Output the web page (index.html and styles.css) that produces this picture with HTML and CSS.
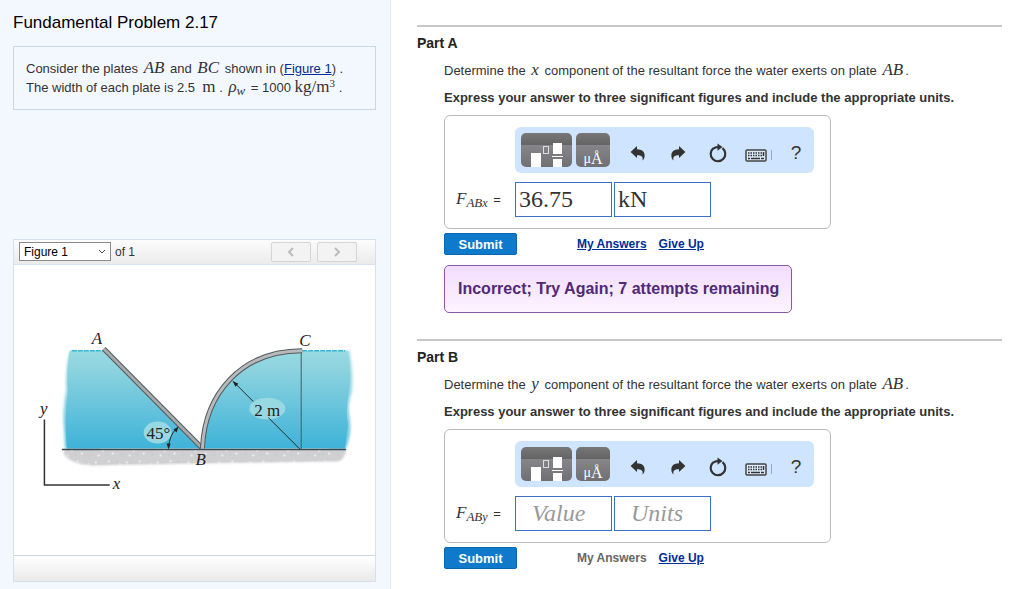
FILE: index.html
```html
<!DOCTYPE html>
<html lang="en">
<head>
    <meta charset="UTF-8">
    <meta name="viewport" content="width=device-width, initial-scale=1.0">
    <title>Fundamental Problem 2.17</title>
    <link rel="stylesheet" href="styles.css">
</head>
<body>
    <!-- shared icons -->
    <svg class="sprite" aria-hidden="true">
        <symbol id="icon-undo" viewBox="0 0 16 16">
            <path d="M7 1v3.200c5 .1 8 2.600 7.600 6.800-.1 2-.9 3.500-2.200 4.500 1-3.700-.7-5.200-5.400-5.200V13L.6 7z"/>
        </symbol>
        <symbol id="icon-redo" viewBox="0 0 16 16">
            <path d="M9 1v3.200C4 4.300 1 6.800 1.400 11c.1 2 .9 3.500 2.200 4.500-1-3.700.7-5.200 5.400-5.200V13l6.400-6z"/>
        </symbol>
        <symbol id="icon-reset" viewBox="0 0 20 20">
            <path d="M14.500 5.200a7.300 7.300 0 1 1-9.300.2" fill="none" stroke="#333" stroke-width="2.200"/>
            <path d="M9.500.5l5 3.500-5 3.800z"/>
            <path d="M5 5.800Q7 4 10.500 3.800" fill="none" stroke="#333" stroke-width="2.200"/>
        </symbol>
        <symbol id="icon-keyboard" viewBox="0 0 22 13">
            <rect x="1" y="1" width="20" height="11" rx="1" fill="#dcebfa" stroke="#444" stroke-width="1.500"/>
            <path d="M3 4h15M3 6.500h15" fill="none" stroke="#333" stroke-width="1.500" stroke-dasharray="1.500 1"/>
            <path d="M3 9.500h2M6 9.500h9M16 9.500h3M18.500 3v4" fill="none" stroke="#333" stroke-width="1.500"/>
        </symbol>
        <symbol id="icon-template" viewBox="0 0 32 24">
            <rect x="0" y="10" width="10" height="14" fill="#fff"/>
            <rect x="12.500" y="3.500" width="5" height="7" fill="none" stroke="#ddd"/>
            <rect x="22" y="0" width="9" height="11" fill="#fff"/>
            <rect x="21" y="13" width="11" height="1" fill="#fff"/>
            <rect x="22" y="16" width="9" height="8" fill="#fff"/>
        </symbol>
    </svg>

    <div class="page">
        <aside class="sidebar">
            <h1>Fundamental Problem 2.17</h1>
            <div class="intro">
                Consider the plates <i class="math">AB</i> and <i class="math">BC</i> shown in (<a href="#figure">Figure 1</a>) .<br>
                The width of each plate is 2.5&nbsp; <span class="unit">m</span> . <i class="math">ρ<sub>w</sub></i> = 1000 <span class="unit">kg/m<sup>3</sup></span> .
            </div>

            <div class="figure-panel" id="figure">
                <div class="figure-bar">
                    <div class="picker">
                        <select id="figureSelect">
                            <option>Figure 1</option>
                        </select>
                        <svg width="8" height="6" viewBox="0 0 8 6"><path d="M1 1l3 3 3-3"/></svg>
                    </div>
                    <label for="figureSelect">of 1</label>
                    <div class="pager">
                        <button type="button" aria-label="Previous figure" disabled>
                            <svg width="8" height="10" viewBox="0 0 8 10"><path d="M6 1L2 5l4 4"/></svg>
                        </button>
                        <button type="button" aria-label="Next figure" disabled>
                            <svg width="8" height="10" viewBox="0 0 8 10"><path d="M2 1l4 4-4 4"/></svg>
                        </button>
                    </div>
                </div>
                <svg class="drawing" viewBox="14 265 362 291" role="img" aria-label="Plates AB and BC holding water">
                    <defs>
                        <linearGradient id="water" gradientUnits="userSpaceOnUse" x1="0" y1="350" x2="0" y2="450">
                            <stop offset="0" stop-color="#98dae1"/>
                            <stop offset="0.200" stop-color="#8cd3df"/>
                            <stop offset="1" stop-color="#3db2d8"/>
                        </linearGradient>
                        <filter id="soft"><feGaussianBlur stdDeviation="1.200"/></filter>
                        <pattern id="gravel" width="31" height="17" patternUnits="userSpaceOnUse">
                            <rect width="31" height="17" fill="#d0d0d3"/>
                            <g fill="#f6f6f7">
                                <circle cx="3" cy="4" r="1"/><circle cx="10" cy="9" r="1"/>
                                <circle cx="16" cy="3" r="1"/><circle cx="20" cy="12" r="1"/>
                                <circle cx="27" cy="6" r="1"/><circle cx="6" cy="14" r="1"/>
                            </g>
                            <g fill="#b5b5b9">
                                <circle cx="7" cy="5" r=".5"/><circle cx="14" cy="13" r=".5"/>
                                <circle cx="24" cy="3" r=".5"/><circle cx="29" cy="13" r=".5"/>
                            </g>
                        </pattern>
                    </defs>
                    <!-- ground -->
                    <path d="M64 450H348L345 457Q342 463 336 462L200 464 90 466Q72 465 64 455z" fill="url(#gravel)" filter="url(#soft)"/>
                    <path d="M66 450H346L342 458 336 461 200 463 90 465 72 460z" fill="url(#gravel)"/>
                    <!-- water -->
                    <path d="M69 352Q65 370 66 390Q62 415 64 430L65 449H100V352z" fill="url(#water)" filter="url(#soft)" opacity=".7"/>
                    <path d="M70 351Q66 370 68 392Q64 415 67 449H201L104 351z" fill="url(#water)"/>
                    <path d="M330 351H351Q355 375 353 392Q348 405 351 420Q353 435 347 449H330z" fill="url(#water)" filter="url(#soft)" opacity=".7"/>
                    <path d="M204 449C206 395 242 351 302 351H349Q353 375 350 392Q346 410 349 425L346 449z" fill="url(#water)"/>
                    <path d="M72 351H104M303 351H346" stroke="#35b5d6" stroke-width="1.500" stroke-dasharray="5 1"/>
                    <path d="M62 450H347" stroke="#3c4a50" stroke-width="1.500"/>
                    <path d="M302 352V450" stroke="#37606c"/>
                    <!-- plates -->
                    <path d="M104 349L202 448" stroke="#54585b" stroke-width="5"/>
                    <path d="M104 349L202 448" stroke="#a6abae" stroke-width="3"/>
                    <path d="M203 449C205 395 241 351 303 351" fill="none" stroke="#54585b" stroke-width="5"/>
                    <path d="M203 449C205 395 241 351 303 351" fill="none" stroke="#b6babd" stroke-width="3"/>
                    <!-- dimensions -->
                    <ellipse cx="158" cy="433" rx="14" ry="11" fill="#98d8e1"/>
                    <ellipse cx="268" cy="409" rx="18" ry="11" fill="#98d8e1"/>
                    <path d="M236 384L254 402M269 418L301 450M169 448Q170 436 176 430" fill="none" stroke="#23292c"/>
                    <path d="M233 381l6 3-3 3zM169 450l-2-6h4zM179 427l-2 6-3-3z" fill="#222"/>
                    <path d="M44.500 420V485.500H110" fill="none" stroke="#333" stroke-width="1.500"/>
                    <g class="labels">
                        <text x="92" y="344" class="var">A</text>
                        <text x="300" y="346" class="var">C</text>
                        <text x="196" y="466" class="var">B</text>
                        <text x="40" y="414" class="var">y</text>
                        <text x="113" y="490" class="var">x</text>
                        <text x="147" y="439">45°</text>
                        <text x="255" y="416">2 m</text>
                    </g>
                </svg>
                <div class="figure-foot"></div>
            </div>
        </aside>

        <main class="content">
            <section class="part">
                <h2>Part A</h2>
                <div class="part-body">
                    <p>Determine the <i class="math">x</i> component of the resultant force the water exerts on plate <i class="math">AB</i>.</p>
                    <p class="hint">Express your answer to three significant figures and include the appropriate units.</p>
                    <div class="answer">
                        <div class="toolbar">
                            <button type="button" class="tile wide" aria-label="Templates"><svg width="32" height="24"><use href="#icon-template"/></svg></button>
                            <button type="button" class="tile" aria-label="Symbols"><span class="mu">μ</span><span>Å</span></button>
                            <button type="button" class="tool" aria-label="Undo"><svg width="16" height="16"><use href="#icon-undo"/></svg></button>
                            <button type="button" class="tool" aria-label="Redo"><svg width="16" height="16"><use href="#icon-redo"/></svg></button>
                            <button type="button" class="tool" aria-label="Reset"><svg width="20" height="20"><use href="#icon-reset"/></svg></button>
                            <button type="button" class="tool keys" aria-label="Keyboard shortcuts"><svg width="22" height="13"><use href="#icon-keyboard"/></svg></button>
                            <button type="button" class="tool help" aria-label="Help">?</button>
                        </div>
                        <label for="valueA"><i class="math">F<sub>AB<small>x</small></sub></i> =</label>
                        <div class="fields">
                            <input type="text" id="valueA" value="36.75">
                            <input type="text" value="kN" aria-label="Units">
                        </div>
                    </div>
                    <div class="actions">
                        <button type="button" class="submit">Submit</button>
                        <a href="#answers">My Answers</a>
                        <a href="#giveup">Give Up</a>
                    </div>
                    <div class="feedback">Incorrect; Try Again; 7 attempts remaining</div>
                </div>
            </section>

            <section class="part">
                <h2>Part B</h2>
                <div class="part-body">
                    <p>Determine the <i class="math">y</i> component of the resultant force the water exerts on plate <i class="math">AB</i>.</p>
                    <p class="hint">Express your answer to three significant figures and include the appropriate units.</p>
                    <div class="answer">
                        <div class="toolbar">
                            <button type="button" class="tile wide" aria-label="Templates"><svg width="32" height="24"><use href="#icon-template"/></svg></button>
                            <button type="button" class="tile" aria-label="Symbols"><span class="mu">μ</span><span>Å</span></button>
                            <button type="button" class="tool" aria-label="Undo"><svg width="16" height="16"><use href="#icon-undo"/></svg></button>
                            <button type="button" class="tool" aria-label="Redo"><svg width="16" height="16"><use href="#icon-redo"/></svg></button>
                            <button type="button" class="tool" aria-label="Reset"><svg width="20" height="20"><use href="#icon-reset"/></svg></button>
                            <button type="button" class="tool keys" aria-label="Keyboard shortcuts"><svg width="22" height="13"><use href="#icon-keyboard"/></svg></button>
                            <button type="button" class="tool help" aria-label="Help">?</button>
                        </div>
                        <label for="valueB"><i class="math">F<sub>AB<small>y</small></sub></i> =</label>
                        <div class="fields">
                            <input type="text" id="valueB" placeholder="Value">
                            <input type="text" placeholder="Units" aria-label="Units">
                        </div>
                    </div>
                    <div class="actions">
                        <button type="button" class="submit">Submit</button>
                        <span class="off">My Answers</span>
                        <a href="#giveup">Give Up</a>
                    </div>
                </div>
            </section>
        </main>
    </div>
</body>
</html>
```
FILE: styles.css
```css
* { box-sizing: border-box; }
body {
    margin: 0;
    font-family: "Liberation Sans", Arial, sans-serif;
    font-size: 13px;
    line-height: 20px;
    color: #333;
    background: #fff;
}
.sprite {
    position: absolute;
    width: 0;
    height: 0;
}
.page {
    display: grid;
    grid-template-columns: 391px 1fr;
    min-height: 100vh;
}
a { color: #002d96; }
.math, .unit {
    font-family: "Liberation Serif", "Times New Roman", serif;
    font-size: 17px;
    line-height: 1px;
}
.math { margin: 0 2px; }
sub, sup {
    font-size: 13px;
    line-height: 1px;
}
sub { vertical-align: -3px; }
sup {
    font-size: 11px;
    vertical-align: 5px;
}

/* left column */
.sidebar {
    padding: 13px 14px 7px 13px;
    background: #f3f8ff;
    border-right: 1px solid #e2e9f2;
    display: flex;
    flex-direction: column;
}
h1 {
    margin: 0 0 13px;
    font-size: 17px;
    font-weight: normal;
    line-height: 20px;
    color: #000;
}
.intro {
    height: 64px;
    padding: 12px;
    border: 1px solid #c9d6e4;
    line-height: 19px;
    white-space: nowrap;
}
.figure-panel {
    margin-top: auto;
    border: 1px solid #d5e0ec;
    background: #fff;
}
.figure-bar {
    display: flex;
    align-items: center;
    gap: 4px;
    height: 25px;
    padding: 0 18px 0 5px;
    background: linear-gradient(#fcfcfc, #ebebeb);
    border-bottom: 1px solid #d5e3f0;
    font-size: 12px;
}
.picker {
    position: relative;
    display: flex;
}
.picker select {
    width: 92px;
    height: 19px;
    padding: 0 4px;
    border: 1px solid #8a8a8a;
    border-radius: 0;
    appearance: none;
    font: 12px "Liberation Sans", Arial, sans-serif;
    color: #000;
    background: #fff;
}
.picker svg {
    position: absolute;
    top: 7px;
    right: 5px;
    fill: none;
    stroke: #444;
    pointer-events: none;
}
.pager {
    display: flex;
    gap: 6px;
    margin-left: auto;
}
.pager button {
    width: 40px;
    height: 20px;
    padding: 0;
    border: 1px solid #d4d4d4;
    border-radius: 2px;
    background: #f3f3f3;
    display: flex;
    align-items: center;
    justify-content: center;
}
.pager path {
    fill: none;
    stroke: #bbb;
    stroke-width: 2;
}
.drawing {
    display: block;
    width: 100%;
}
.labels {
    font-family: "Liberation Serif", "Times New Roman", serif;
    font-size: 17px;
    fill: #222;
}
.var { font-style: italic; }
.figure-foot {
    height: 26px;
    border-top: 1px solid #c9d6e4;
    background: linear-gradient(#fff, #e9e9e9);
}

/* right column */
.content { padding: 25px 22px 0 26px; }
.part {
    margin-bottom: 26px;
    padding-top: 6px;
    border-top: 2px solid #c8c8c8;
}
.part:last-child { margin-bottom: 0; }
h2 {
    margin: 0 0 8px;
    font-size: 14px;
    line-height: 20px;
    color: #222;
}
.part-body { padding-left: 27px; }
.part-body p { margin: 0 0 7px; }
.part-body .hint { font-weight: bold; }
.answer {
    display: grid;
    grid-template-columns: 59px 299px;
    row-gap: 9px;
    align-items: center;
    width: 387px;
    padding: 11px;
    border: 1px solid #bbb;
    border-radius: 6px;
}
.answer label { white-space: nowrap; }
.answer label .math { margin-left: 0; }
.answer small { font-size: 12px; }
.toolbar {
    grid-column: 2;
    display: flex;
    align-items: center;
    height: 46px;
    padding-left: 6px;
    border-radius: 6px;
    background: #cfe5ff;
}
.toolbar button {
    padding: 0;
    border: 0;
    background: none;
    display: flex;
    align-items: center;
    justify-content: center;
}
.toolbar .tile {
    width: 34px;
    height: 34px;
    margin-right: 8px;
    border-radius: 5px;
    background: linear-gradient(#777 0, #646464 12px, #85858a 12px, #6f6f74 100%);
    align-items: flex-end;
    color: #fff;
    font: 16px/16px "Liberation Serif", serif;
}
.toolbar .wide {
    width: 51px;
    margin-right: 4px;
}
.toolbar .mu { font-size: 14px; }
.toolbar .tool {
    width: 40px;
    height: 40px;
    padding-top: 6px;
    fill: #333;
}
.toolbar .keys { padding-top: 10px; }
.keys::after {
    content: "";
    height: 10px;
    margin-left: 4px;
    border-left: 1px solid #9ab;
}
.toolbar .help {
    width: 36px;
    font: 19px "Liberation Sans", Arial, sans-serif;
    color: #333;
}
.fields {
    display: flex;
    gap: 2px;
}
.fields input {
    width: 97px;
    height: 35px;
    padding: 0 3px;
    border: 1px solid #3b6fc9;
    font: 24px "Liberation Serif", "Times New Roman", serif;
    color: #333;
}
.fields input::placeholder {
    font-style: italic;
    color: #999;
}
.fields input:placeholder-shown { padding-left: 16px; }
.actions {
    display: flex;
    align-items: center;
    gap: 12px;
    margin-top: 4px;
    font-weight: bold;
    font-size: 12px;
}
.submit {
    width: 73px;
    height: 22px;
    margin-right: 48px;
    padding: 0;
    border: 1px solid #0a66b0;
    border-radius: 2px;
    background: #0f7acb;
    font: bold 13px "Liberation Sans", Arial, sans-serif;
    color: #fff;
}
.off { color: #666; }
.feedback {
    width: 348px;
    margin-top: 10px;
    padding: 13px;
    border: 1px solid #8a5a9e;
    border-radius: 5px;
    background: linear-gradient(#f2dcff, #fdf3ff);
    font-size: 16px;
    font-weight: bold;
    white-space: nowrap;
    color: #4f2a78;
}
```
